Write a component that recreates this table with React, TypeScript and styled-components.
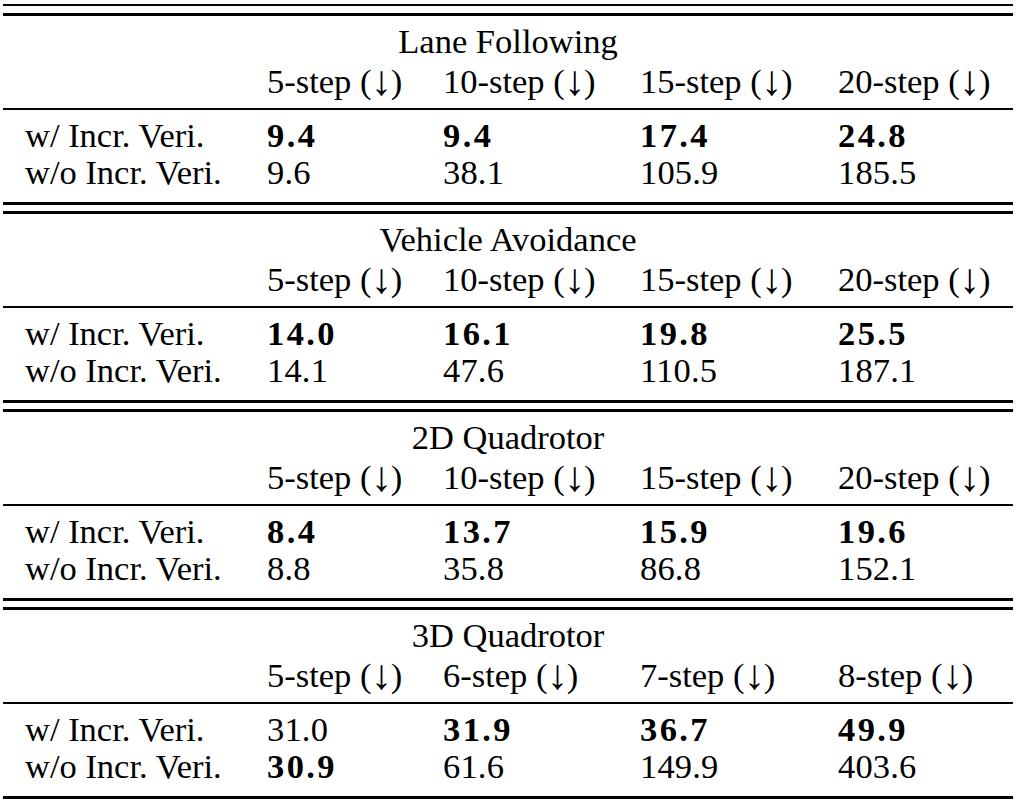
import React from "react";
import styled, { createGlobalStyle } from "styled-components";

const GlobalStyle = createGlobalStyle`
  html, body {
    margin: 0;
    padding: 0;
    background: #ffffff;
  }
  body {
    font-family: "Liberation Serif", "Times New Roman", serif;
    color: #000000;
  }
`;

const Table = styled.div`
  width: 1010px;
  margin-left: 3px;
  padding-top: 4px;
  display: flex;
  flex-direction: column;
  font-size: 34.5px;
`;

const Rule = styled.div<{ $h: number; $mt?: number; $mb?: number }>`
  height: ${(p) => p.$h}px;
  background: #000000;
  margin-top: ${(p) => p.$mt ?? 0}px;
  margin-bottom: ${(p) => p.$mb ?? 0}px;
`;

const Section = styled.section<{ $first: boolean }>`
  display: flex;
  flex-direction: column;
  margin-top: ${(p) => (p.$first ? 0 : 6)}px;
`;

const Title = styled.div`
  text-align: center;
  line-height: 40px;
  padding-top: 5px;
`;

const Grid = styled.div<{ $lh: number; $pt?: number }>`
  display: grid;
  grid-template-columns: 264px 176px 197px 198px 1fr;
  line-height: ${(p) => p.$lh}px;
  padding-top: ${(p) => p.$pt ?? 0}px;
  white-space: nowrap;
`;

const Label = styled.div`
  padding-left: 22px;
`;

const Cell = styled.div``;

const Arrow = styled.span`
  display: inline-block;
  font-size: 1.22em;
  line-height: 0;
  vertical-align: -0.04em;
  margin: 0 -0.02em;
`;

const Value = styled.div<{ $bold: boolean }>`
  font-weight: ${(p) => (p.$bold ? 700 : 400)};
  letter-spacing: ${(p) => (p.$bold ? "0.07em" : "0.005em")};
`;

type Row = { label: string; values: { v: string; b: boolean }[] };
type Sec = { title: string; steps: string[]; rows: Row[] };

const mk = (label: string, vals: string[], bold: boolean[]): Row => ({
  label,
  values: vals.map((v, i) => ({ v, b: bold[i] })),
});

const std = ["5-step", "10-step", "15-step", "20-step"];

const sections: Sec[] = [
  {
    title: "Lane Following",
    steps: std,
    rows: [
      mk("w/ Incr. Veri.", ["9.4", "9.4", "17.4", "24.8"], [true, true, true, true]),
      mk("w/o Incr. Veri.", ["9.6", "38.1", "105.9", "185.5"], [false, false, false, false]),
    ],
  },
  {
    title: "Vehicle Avoidance",
    steps: std,
    rows: [
      mk("w/ Incr. Veri.", ["14.0", "16.1", "19.8", "25.5"], [true, true, true, true]),
      mk("w/o Incr. Veri.", ["14.1", "47.6", "110.5", "187.1"], [false, false, false, false]),
    ],
  },
  {
    title: "2D Quadrotor",
    steps: std,
    rows: [
      mk("w/ Incr. Veri.", ["8.4", "13.7", "15.9", "19.6"], [true, true, true, true]),
      mk("w/o Incr. Veri.", ["8.8", "35.8", "86.8", "152.1"], [false, false, false, false]),
    ],
  },
  {
    title: "3D Quadrotor",
    steps: ["5-step", "6-step", "7-step", "8-step"],
    rows: [
      mk("w/ Incr. Veri.", ["31.0", "31.9", "36.7", "49.9"], [false, true, true, true]),
      mk("w/o Incr. Veri.", ["30.9", "61.6", "149.9", "403.6"], [true, false, false, false]),
    ],
  },
];

export default function App() {
  return (
    <>
      <GlobalStyle />
      <Table>
        <Rule $h={2} $mb={7} />
        {sections.map((s, si) => (
          <Section key={s.title} $first={si === 0}>
            <Rule $h={3} />
            <Title>{s.title}</Title>
            <Grid $lh={40}>
              <Label />
              {s.steps.map((st) => (
                <Cell key={st}>
                  {st} (<Arrow>↓</Arrow>)
                </Cell>
              ))}
            </Grid>
            <Rule $h={2} $mt={7} />
            <Grid $lh={37} $pt={7}>
              {s.rows.map((r) => (
                <React.Fragment key={r.label}>
                  <Label>{r.label}</Label>
                  {r.values.map((v, i) => (
                    <Value key={i} $bold={v.b}>
                      {v.v}
                    </Value>
                  ))}
                </React.Fragment>
              ))}
            </Grid>
            <Rule $h={3} $mt={11} />
          </Section>
        ))}
      </Table>
    </>
  );
}
